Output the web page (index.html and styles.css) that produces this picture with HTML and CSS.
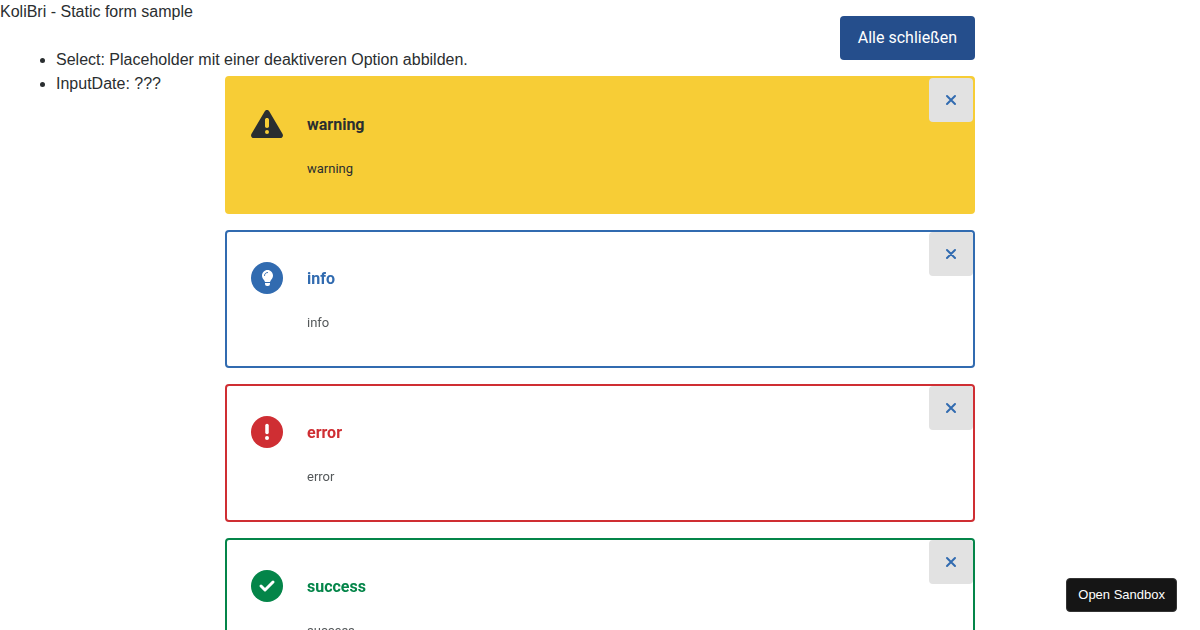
FILE: index.html
```html
<!DOCTYPE html>
<html lang="de">
<head>
<meta charset="utf-8">
<meta name="viewport" content="width=device-width, initial-scale=1">
<title>KoliBri - Static form sample</title>
<link rel="stylesheet" href="styles.css">
</head>
<body>
<main class="page">
  <div>KoliBri - Static form sample</div>
  <ul class="notes">
    <li>Select: Placeholder mit einer deaktiveren Option abbilden.</li>
    <li>InputDate: ???</li>
  </ul>
</main>

<section class="toaster" aria-label="Meldungen">
  <button class="close-all" type="button">Alle schließen</button>

  <article class="toast warning">
    <div class="toast-head">
      <svg class="icon" viewBox="0 0 32 32" aria-hidden="true"><path fill="currentColor" fill-rule="evenodd" d="M16 2c.9 0 1.700.5 2.200 1.300l13.400 22.800c1 1.800-.3 3.900-2.200 3.900H2.600c-1.900 0-3.200-2.100-2.200-3.900L13.800 3.300C14.300 2.500 15.100 2 16 2zm0 8c-1.100 0-2 .7-2 1.700v6.600c0 1 .9 1.700 2 1.700s2-.7 2-1.700v-6.600c0-1-.9-1.700-2-1.700zm0 12a2 2 0 1 0 0 4 2 2 0 0 0 0-4z"/></svg>
      <strong class="title">warning</strong>
    </div>
    <div class="text">warning</div>
    <button class="close" type="button" aria-label="Schließen"><svg class="cross" viewBox="0 0 12 12" aria-hidden="true"><path d="M2 2l8 8M10 2l-8 8"/></svg></button>
  </article>

  <article class="toast info">
    <div class="toast-head">
      <svg class="icon" viewBox="0 0 32 32" aria-hidden="true"><circle cx="16" cy="16" r="16" fill="currentColor"/><path fill="#fff" d="M16.500 8c3.100 0 5.500 2.500 5.500 5.500 0 2.300-1.200 3.400-2 4.500-.6.900-.8 1.500-1 2h-5c-.2-.5-.4-1.100-1-2-.8-1.100-2-2.200-2-4.500C11 10.500 13.400 8 16.500 8zM14 21h5v1a2 2 0 0 1-2 2h-1a2 2 0 0 1-2-2z"/><path d="M13.500 13.500c0-1.700 1.300-3 3-3" fill="none" stroke="currentColor" stroke-linecap="round"/></svg>
      <strong class="title">info</strong>
    </div>
    <div class="text">info</div>
    <button class="close" type="button" aria-label="Schließen"><svg class="cross" viewBox="0 0 12 12" aria-hidden="true"><path d="M2 2l8 8M10 2l-8 8"/></svg></button>
  </article>

  <article class="toast error">
    <div class="toast-head">
      <svg class="icon" viewBox="0 0 32 32" aria-hidden="true"><circle cx="16" cy="16" r="16" fill="currentColor"/><path d="M16 9.500v7" stroke="#fff" stroke-width="3.500" stroke-linecap="round"/><circle cx="16" cy="22" r="2" fill="#fff"/></svg>
      <strong class="title">error</strong>
    </div>
    <div class="text">error</div>
    <button class="close" type="button" aria-label="Schließen"><svg class="cross" viewBox="0 0 12 12" aria-hidden="true"><path d="M2 2l8 8M10 2l-8 8"/></svg></button>
  </article>

  <article class="toast success">
    <div class="toast-head">
      <svg class="icon" viewBox="0 0 32 32" aria-hidden="true"><circle cx="16" cy="16" r="16" fill="currentColor"/><path d="M10 16l4 4 8-8" fill="none" stroke="#fff" stroke-width="3" stroke-linecap="round" stroke-linejoin="round"/></svg>
      <strong class="title">success</strong>
    </div>
    <div class="text">success</div>
    <button class="close" type="button" aria-label="Schließen"><svg class="cross" viewBox="0 0 12 12" aria-hidden="true"><path d="M2 2l8 8M10 2l-8 8"/></svg></button>
  </article>
</section>

<button class="sandbox" type="button">Open Sandbox</button>
</body>
</html>
```
FILE: styles.css
```css
*, *::before, *::after {
  box-sizing: border-box;
}

body {
  margin: 0;
  background: #fff;
  color: #2a2e30;
  font: 16px/24px "Liberation Sans", Arial, sans-serif;
}

.notes {
  margin: 24px 0 16px;
  padding-left: 56px;
}

.toaster {
  position: fixed;
  inset: 0;
  display: flex;
  flex-direction: column;
  gap: 16px;
  width: 100%;
  max-width: 750px;
  margin: 0 auto;
  padding-top: 16px;
  overflow: hidden;
  font-family: Roboto, sans-serif;
}

.close-all {
  flex: none;
  align-self: flex-end;
  min-height: 44px;
  padding: 8px 18px;
  border: 0;
  border-radius: 4px;
  background: #254e8c;
  color: #fff;
  font: 16px/24px Roboto, sans-serif;
}

.toast {
  position: relative;
  flex: none;
  padding: 24px 24px 32px;
  border: 2px solid currentColor;
  border-radius: 4px;
  background: #fff;
}

.toast-head {
  display: flex;
  align-items: center;
  gap: 24px;
  min-height: 44px;
}

.icon {
  width: 32px;
  height: 32px;
}

.title {
  padding-top: 2px;
  font-size: 16px;
  font-weight: 700;
}

.text {
  margin-top: 12px;
  padding-left: 56px;
  color: #54585a;
  font-size: 13px;
  line-height: 22px;
}

.warning {
  border-color: #f7cd36;
  background: #f7cd36;
  color: #2a2e30;
}

.warning .text {
  color: #2a2e30;
}

.info {
  color: #316bb0;
}

.error {
  color: #cf2e33;
}

.success {
  color: #048549;
}

.close {
  position: absolute;
  top: 0;
  right: 0;
  display: grid;
  place-items: center;
  width: 44px;
  height: 44px;
  padding: 0;
  border: 0;
  border-radius: 4px;
  background: #e2e2e2;
  color: #316bb0;
}

.cross {
  width: 12px;
  height: 12px;
  fill: none;
  stroke: currentColor;
  stroke-width: 2;
  stroke-linecap: round;
}

.sandbox {
  position: fixed;
  right: 23px;
  bottom: 18px;
  height: 34px;
  padding: 0 11px;
  border: 1px solid #343434;
  border-radius: 4px;
  background: #151515;
  color: #fff;
  font: 13px/16px "Liberation Sans", Arial, sans-serif;
}
```
